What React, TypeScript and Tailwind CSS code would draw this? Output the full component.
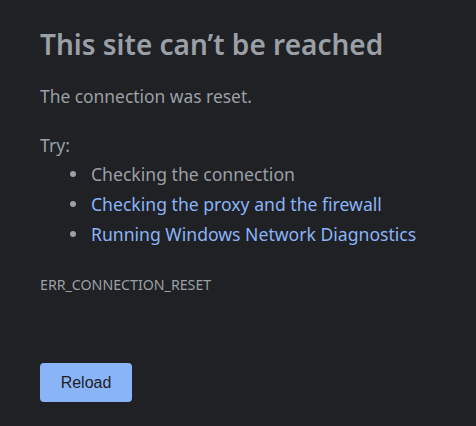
import React from "react";

function Item({ children, link }: { children: React.ReactNode; link?: boolean }) {
  return (
    <li className="flex items-center h-[30px]">
      <span className="w-[6px] h-[6px] rounded-full bg-[#9aa0a6] ml-[30px] mr-[15px] shrink-0" />
      <span className={link ? "text-[#8ab4f8]" : ""}>{children}</span>
    </li>
  );
}

export default function App() {
  return (
    <div className="w-[476px] h-[426px] bg-[#202124] text-[#9aa0a6] overflow-hidden" style={{ fontFamily: '"Noto Sans", "Open Sans", sans-serif' }}>
      <div className="pl-[40px] pt-[24px]">
        <h1 className="text-[28px] leading-[40px] font-semibold text-[#9aa0a6] whitespace-nowrap">This site can’t be reached</h1>
        <p className="mt-[20px] text-[17.4px] leading-[24px]">The connection was reset.</p>
        <div className="mt-[25px] text-[17.6px] leading-[24px]">
          <p>Try:</p>
          <ul className="mt-[2px] flex flex-col">
            <Item>Checking the connection</Item>
            <Item link>Checking the proxy and the firewall</Item>
            <Item link>Running Windows Network Diagnostics</Item>
          </ul>
        </div>
        <p className="mt-[27px] text-[14.2px] leading-[18px]">ERR_CONNECTION_RESET</p>
        <button className="mt-[69px] w-[92px] h-[39px] rounded-[4px] bg-[#8ab4f8] text-[#202124] text-[16px]" style={{ fontFamily: '"Liberation Sans", Arial, sans-serif' }}>Reload</button>
      </div>
    </div>
  );
}
